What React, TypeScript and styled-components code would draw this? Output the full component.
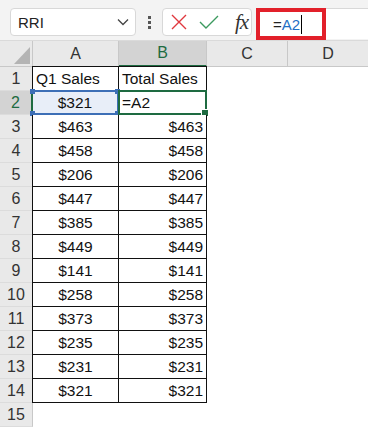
import React from 'react';
import styled, { createGlobalStyle } from 'styled-components';

const GlobalStyle = createGlobalStyle`
  body {
    margin: 0;
    background: #fff;
    font-family: "Liberation Sans", Arial, sans-serif;
  }
`;

const colA = ['Q1 Sales', '$321', '$463', '$458', '$206', '$447', '$385', '$449', '$141', '$258', '$373', '$235', '$231', '$321'];
const colB = ['Total Sales', '=A2', '$463', '$458', '$206', '$447', '$385', '$449', '$141', '$258', '$373', '$235', '$231', '$321'];

const App: React.FC = () => {
  return (
    <Page>
      <GlobalStyle />
      <Toolbar>
        <NameBox>
          <span>RRI</span>
          <svg width="12" height="8" viewBox="0 0 12 8">
            <path d="M1 1.5 L6 6.5 L11 1.5" fill="none" stroke="#444" strokeWidth="1.3" />
          </svg>
        </NameBox>
        <Dots>
          <i /><i /><i />
        </Dots>
        <FxButtons>
          <svg width="16" height="16" viewBox="0 0 16 16">
            <path d="M1 1 L15 15 M15 1 L1 15" stroke="#e0383e" strokeWidth="1.4" />
          </svg>
          <svg width="20" height="14" viewBox="0 0 20 14">
            <path d="M1 7 L7 13 L19 1" fill="none" stroke="#3c9a5f" strokeWidth="1.4" />
          </svg>
          <FxLabel>fx</FxLabel>
        </FxButtons>
        <FormulaInput>
          <RedBox>
            <span>=</span><RefText>A2</RefText><Caret />
          </RedBox>
        </FormulaInput>
      </Toolbar>
      <Grid>
        <Corner>
          <svg width="16" height="17" viewBox="0 0 16 17">
            <polygon points="16,0 16,17 0,17" fill="#b4b4b4" />
          </svg>
        </Corner>
        <ColHeader>A</ColHeader>
        <ColHeader $active>B</ColHeader>
        <ColHeader>C</ColHeader>
        <ColHeader $last>D</ColHeader>
        {colA.map((a, i) => {
          const row = i + 1;
          const active = row === 2;
          return (
            <React.Fragment key={row}>
              <RowHeader $active={active}>{row}</RowHeader>
              <Cell $align={row === 1 ? 'left' : 'center'} $first $top={row === 1} $ref={active}>
                {a}
                {active && (
                  <>
                    <Handle style={{ left: -3, top: -3 }} />
                    <Handle style={{ right: -3, top: -3 }} />
                    <Handle style={{ left: -3, bottom: -3 }} />
                    <Handle style={{ right: -3, bottom: -3 }} />
                  </>
                )}
              </Cell>
              <Cell $align={row <= 2 ? 'left' : 'right'} $top={row === 1} $selected={active}>
                {colB[i]}
                {active && <FillHandle />}
              </Cell>
              <Blank />
              <Blank />
            </React.Fragment>
          );
        })}
        <RowHeader>15</RowHeader>
        <Blank />
        <Blank />
        <Blank />
        <Blank />
      </Grid>
    </Page>
  );
};

export default App;

const Page = styled.div`
  width: 368px;
  height: 430px;
  overflow: hidden;
  background: #fff;
`;

const Toolbar = styled.div`
  display: flex;
  align-items: flex-start;
  height: 41px;
  box-sizing: border-box;
  padding: 8px 0 0 10px;
  background: #f3f3f3;
  border-bottom: 1px solid #dadada;
`;

const NameBox = styled.div`
  width: 126px;
  height: 28px;
  box-sizing: border-box;
  display: flex;
  align-items: center;
  justify-content: space-between;
  padding: 0 6px 0 7px;
  background: #fff;
  border: 1px solid #d8d8d8;
  border-radius: 4px;
  font-size: 15px;
  color: #222;
`;

const Dots = styled.div`
  width: 26px;
  height: 28px;
  display: flex;
  flex-direction: column;
  align-items: center;
  justify-content: center;
  gap: 2px;

  i {
    display: block;
    width: 3px;
    height: 3px;
    background: #555;
  }
`;

const FxButtons = styled.div`
  width: 90px;
  height: 28px;
  box-sizing: border-box;
  display: flex;
  align-items: center;
  gap: 12px;
  padding-left: 8px;
  background: #fff;
  border: 1px solid #d8d8d8;
  border-radius: 4px;
`;

const FxLabel = styled.span`
  font-family: "Liberation Serif", "Times New Roman", serif;
  font-style: italic;
  font-size: 21px;
  color: #333;
  margin-left: 4px;
  letter-spacing: -1px;
`;

const FormulaInput = styled.div`
  flex: 1;
  height: 30px;
  margin-left: 4px;
  background: #fff;
  border-left: 1px solid #d8d8d8;
  border-top: 1px solid #d8d8d8;
`;

const RedBox = styled.div`
  width: 70px;
  height: 32px;
  margin: -1px 0 0 -1px;
  box-sizing: border-box;
  border: 4px solid #e2202a;
  display: flex;
  align-items: center;
  padding-left: 13px;
  font-size: 15px;
  color: #222;
`;

const RefText = styled.span`
  color: #1f6fc5;
`;

const Caret = styled.span`
  width: 1px;
  height: 19px;
  background: #000;
  margin-left: 1px;
`;

const Grid = styled.div`
  display: grid;
  grid-template-columns: 33px 86px 88px 81px 1fr;
  grid-template-rows: 26px repeat(15, 24px);
`;

const Corner = styled.div`
  background: #e9e9e9;
  border-right: 1px solid #c8c8c8;
  border-bottom: 1px solid #c8c8c8;
  box-sizing: border-box;
  display: flex;
  align-items: flex-end;
  justify-content: flex-end;
  padding: 0 2px 2px 0;
`;

const ColHeader = styled.div<{ $active?: boolean; $last?: boolean }>`
  box-sizing: border-box;
  display: flex;
  align-items: center;
  justify-content: center;
  font-size: 16px;
  background: ${p => (p.$active ? '#d3d3d3' : '#e9e9e9')};
  color: ${p => (p.$active ? '#1e6b41' : '#333')};
  border-right: ${p => (p.$last ? 'none' : '1px solid #c8c8c8')};
  border-bottom: ${p => (p.$active ? '2px solid #1e6b41' : '1px solid #c8c8c8')};
`;

const RowHeader = styled.div<{ $active?: boolean }>`
  box-sizing: border-box;
  display: flex;
  align-items: center;
  justify-content: center;
  font-size: 16px;
  padding-top: 1px;
  background: ${p => (p.$active ? '#d3d3d3' : '#e9e9e9')};
  color: ${p => (p.$active ? '#1e6b41' : '#333')};
  border-right: ${p => (p.$active ? '2px solid #1e6b41' : '1px solid #c8c8c8')};
  border-bottom: 1px solid #dcdcdc;
`;

const Cell = styled.div<{
  $align: 'left' | 'center' | 'right';
  $first?: boolean;
  $top?: boolean;
  $ref?: boolean;
  $selected?: boolean;
}>`
  position: relative;
  box-sizing: border-box;
  display: flex;
  align-items: center;
  padding: 1px 3px 0 3px;
  font-size: 15.5px;
  color: #111;
  justify-content: ${p => (p.$align === 'left' ? 'flex-start' : p.$align === 'center' ? 'center' : 'flex-end')};
  border-right: 1px solid #111;
  border-bottom: 1px solid #111;
  ${p => p.$first && 'border-left: 1px solid #111; margin-left: -1px;'}
  ${p => p.$top && 'border-top: 1px solid #111; margin-top: -1px;'}
  background: ${p => (p.$ref ? '#e8eef8' : '#fff')};
  ${p => p.$ref && `
    border-top: 2px solid #3d6fb6;
    border-bottom: 2px solid #3d6fb6;
    border-right: 2px solid #3d6fb6;
    border-left: none;
    margin-left: 0;
    margin-top: -1px;
  `}
  ${p => p.$selected && `
    border: 2px solid #1e6b41;
    margin-top: -1px;
    margin-left: -1px;
    padding-left: 2px;
  `}
`;

const Handle = styled.span`
  position: absolute;
  width: 5px;
  height: 5px;
  background: #3d6fb6;
`;

const FillHandle = styled.span`
  position: absolute;
  right: -4px;
  bottom: -4px;
  width: 6px;
  height: 6px;
  background: #1e6b41;
  border: 1px solid #fff;
`;

const Blank = styled.div`
  background: #fff;
`;
